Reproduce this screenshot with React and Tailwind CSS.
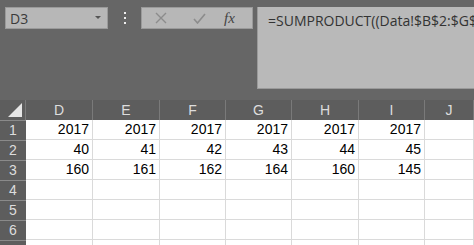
const cols = [
  { name: "D", w: "w-[67px]" },
  { name: "E", w: "w-[67px]" },
  { name: "F", w: "w-[66px]" },
  { name: "G", w: "w-[66px]" },
  { name: "H", w: "w-[67px]" },
  { name: "I", w: "w-[66px]" },
  { name: "J", w: "flex-1" },
];

const rows = [
  ["2017", "2017", "2017", "2017", "2017", "2017", ""],
  ["40", "41", "42", "43", "44", "45", ""],
  ["160", "161", "162", "164", "160", "145", ""],
  ["", "", "", "", "", "", ""],
  ["", "", "", "", "", "", ""],
  ["", "", "", "", "", "", ""],
  ["", "", "", "", "", "", ""],
];

const App = () => {
  return (
    <div className="w-[474px] h-[245px] overflow-hidden bg-[#666666] font-['Liberation_Sans',sans-serif]">
      {/* formula bar area */}
      <div className="flex items-start pt-[7px] pl-[5px] h-[100px]">
        <div className="shrink-0 w-[103px] h-[22px] bg-[#b7b7b7] border border-[#9a9a9a] flex items-center justify-between pl-[4px] pr-[6px]">
          <span className="text-[14px] text-[#3a3a3a] font-['Open_Sans',sans-serif]">D3</span>
          <svg width="6" height="4" viewBox="0 0 6 4">
            <path d="M0 0 L6 0 L3 3 Z" fill="#555" />
          </svg>
        </div>
        <div className="shrink-0 w-[33px] h-[22px] flex flex-col items-center justify-center gap-[3px]">
          <div className="w-[2px] h-[2px] bg-[#eeeeee]" />
          <div className="w-[2px] h-[2px] bg-[#eeeeee]" />
          <div className="w-[2px] h-[2px] bg-[#eeeeee]" />
        </div>
        <div className="shrink-0 w-[112px] h-[22px] bg-[#b7b7b7] border border-[#9a9a9a] flex items-center">
          <svg className="ml-[13px]" width="12" height="12" viewBox="0 0 12 12">
            <path d="M1 1 L11 11 M11 1 L1 11" stroke="#8c8c8c" strokeWidth="1.4" />
          </svg>
          <svg className="ml-[26px]" width="13" height="11" viewBox="0 0 13 11">
            <path d="M1 6 L4.5 10 L12 1" stroke="#8c8c8c" strokeWidth="1.6" fill="none" />
          </svg>
          <span className="ml-[18px] text-[15px] italic text-[#444] font-['Liberation_Serif',serif] leading-none">
            fx
          </span>
        </div>
        <div className="ml-[4px] w-[217px] shrink-0 h-[82px] bg-[#b9b9b9] border-l border-b border-[#9a9a9a] pl-[10px] pt-[3px] overflow-hidden">
          <p className="whitespace-nowrap text-[14px] text-[#333] font-['Open_Sans',sans-serif]">
            =SUMPRODUCT((Data!$B$2:$G$2
          </p>
        </div>
      </div>

      {/* column header */}
      <div className="flex h-[20px] bg-[#5d5d5d]">
        <div className="w-[26px] border-r border-[#7a7a7a] flex items-end justify-end pr-[3px] pb-[3px]">
          <svg width="14" height="14" viewBox="0 0 14 14">
            <path d="M14 0 L14 14 L0 14 Z" fill="#e6e6e6" />
          </svg>
        </div>
        {cols.map((c) => (
          <div
            key={c.name}
            className={`${c.w} border-r border-[#7a7a7a] flex items-center justify-center text-[14px] text-[#dddddd]`}
          >
            {c.name}
          </div>
        ))}
      </div>

      {/* rows */}
      {rows.map((r, i) => (
        <div key={i} className="flex h-[20px]">
          <div className="w-[26px] bg-[#5d5d5d] border-t border-[#8a8a8a] flex items-center justify-center text-[14px] text-[#dddddd]">
            {i < 6 ? i + 1 : ""}
          </div>
          {r.map((v, j) => (
            <div
              key={j}
              className={`${cols[j].w} bg-white border-r border-b border-[#dadada] flex items-center justify-end pr-[3px] text-[14px] text-black`}
            >
              {v}
            </div>
          ))}
        </div>
      ))}
    </div>
  );
};

export default App;
